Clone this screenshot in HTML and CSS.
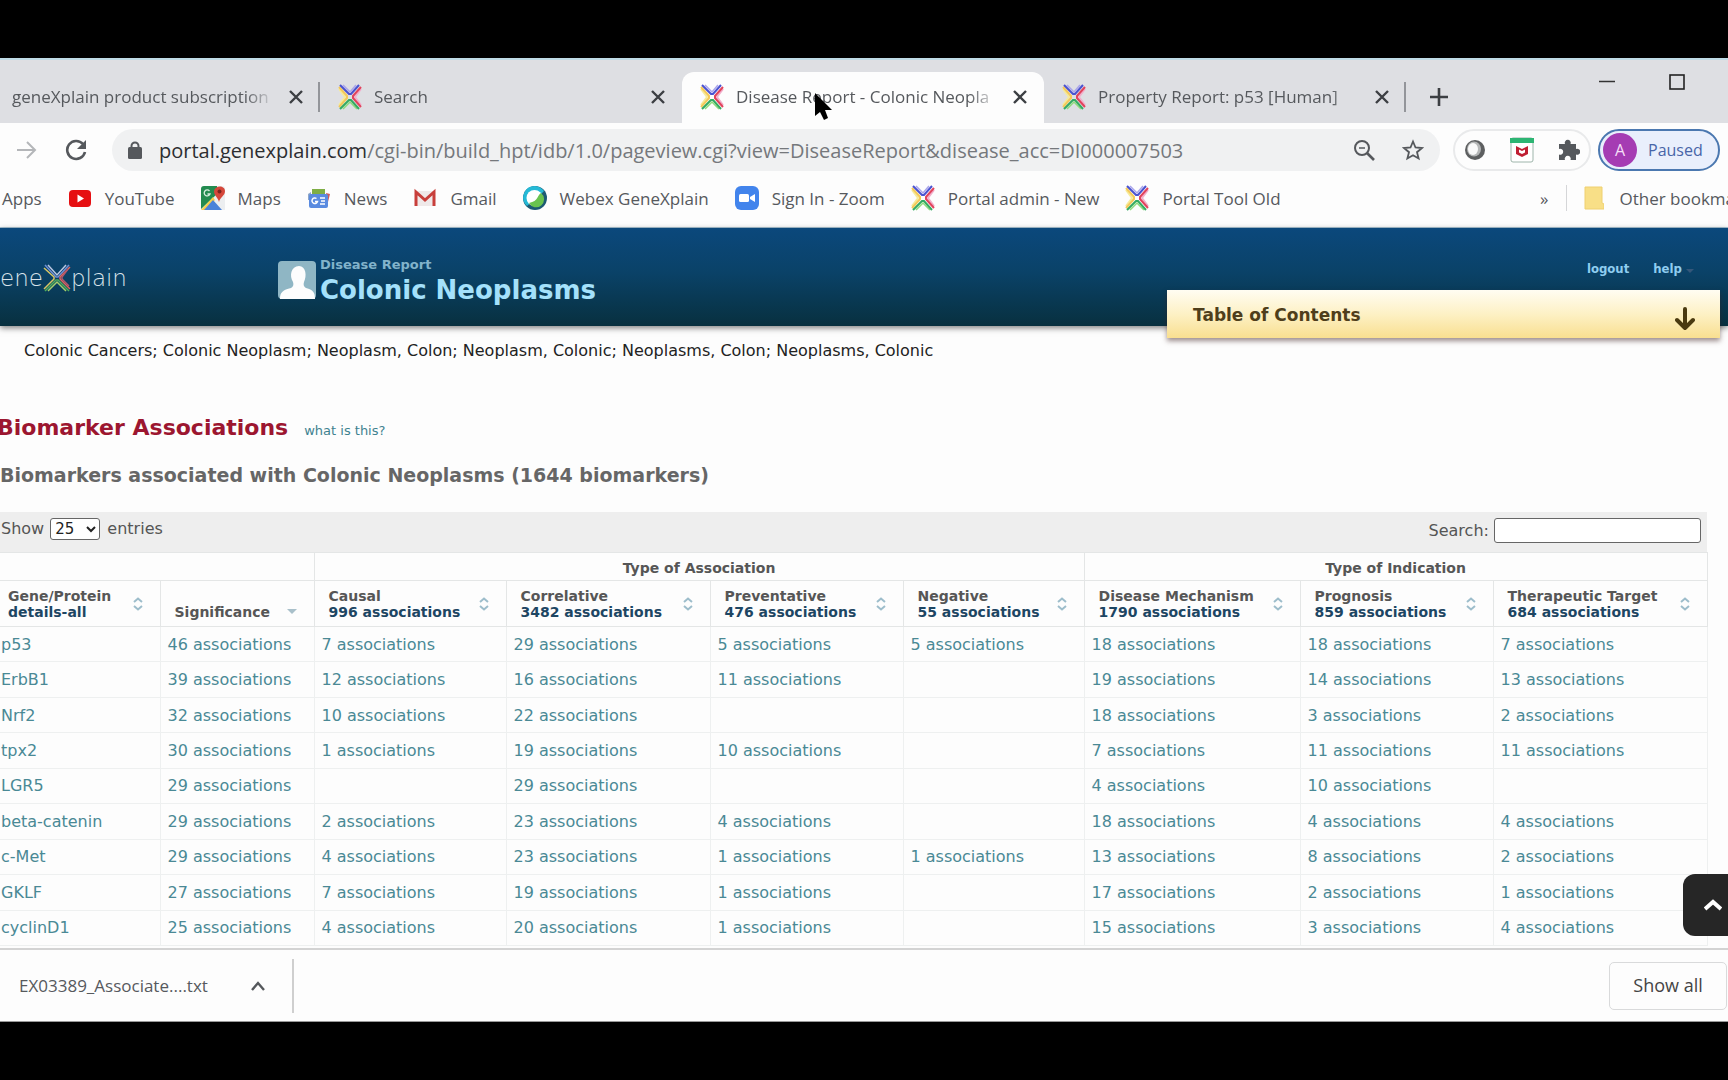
FILE: index.html
```html
<!DOCTYPE html>
<html lang="en">
<head>
    <meta charset="UTF-8">
    <meta name="viewport" content="width=device-width, initial-scale=1.0">
    <title>Disease Report - Colonic Neoplasms</title>
    <link rel="stylesheet" href="styles.css">
</head>
<body>
    <!-- shared icons -->
    <svg class="defs" aria-hidden="true">
        <symbol id="x-logo" viewBox="0 0 24 26">
            <g fill="none" stroke-width="2">
                <path d="M5 1 L12 8 L18 1" stroke="#a9a4ec" stroke-width="1.500"/>
                <path d="M23 5 L17 13 L23 21" stroke="#f2b0cc"/>
                <path d="M1 5 L7 13 L1 21" stroke="#f6eb9a"/>
                <path d="M5 25 L12 18 L19 25" stroke="#8fdc7c" stroke-width="1.500"/>
                <path d="M1 3 L9 12 V14 L1 23" stroke="#f5c95a"/>
                <path d="M23 3 L15 12 V14 L23 23" stroke="#e2435c"/>
                <path d="M2 1 L11 10 H13 L21 1" stroke="#4a52d0"/>
                <path d="M2 25 L11 16 H13 L21 25" stroke="#35ab63"/>
            </g>
        </symbol>
        <symbol id="close" viewBox="0 0 14 14">
            <path d="M1 1 L13 13 M13 1 L1 13" stroke="#3c3f43" stroke-width="2.4"/>
        </symbol>
        <symbol id="sort" viewBox="0 0 10 14">
            <path d="M1 5 L5 1.500 L9 5 M1 9 L5 12.500 L9 9" fill="none" stroke="#9dbdcb" stroke-width="2"/>
        </symbol>
    </svg>

    <div class="window">
        <div class="tabs">
            <div class="tab first">
                <span class="label">geneXplain product subscription</span>
                <button aria-label="Close tab"><svg><use href="#close"/></svg></button>
            </div>
            <div class="tab">
                <svg class="favicon"><use href="#x-logo"/></svg>
                <span class="label">Search</span>
                <button aria-label="Close tab"><svg><use href="#close"/></svg></button>
            </div>
            <div class="tab active">
                <svg class="favicon"><use href="#x-logo"/></svg>
                <span class="label">Disease Report - Colonic Neopla</span>
                <button aria-label="Close tab"><svg><use href="#close"/></svg></button>
            </div>
            <div class="tab last">
                <svg class="favicon"><use href="#x-logo"/></svg>
                <span class="label">Property Report: p53 [Human]</span>
                <button aria-label="Close tab"><svg><use href="#close"/></svg></button>
            </div>
            <button class="new-tab" aria-label="New tab">
                <svg viewBox="0 0 18 18"><path d="M9 0 V18 M0 9 H18" stroke="#3c3f43" stroke-width="2.6"/></svg>
            </button>
            <div class="window-buttons">
                <button aria-label="Minimize"><svg viewBox="0 0 16 16"><path d="M0 7.500 H16" stroke="#333" stroke-width="1.500"/></svg></button>
                <button aria-label="Maximize"><svg viewBox="0 0 16 16"><rect x="1" y="1" width="14" height="14" fill="none" stroke="#222" stroke-width="1.600"/></svg></button>
            </div>
            <svg class="cursor" viewBox="0 0 20 28"><path d="M1 0 V23 L6 19 L10 27 L14 25 L11 17 H18 Z"/></svg>
        </div>

        <div class="toolbar">
            <button class="forward" aria-label="Forward">
                <svg viewBox="0 0 20 20"><path d="M0 10 H18 M10 2 L18 10 L10 18" fill="none" stroke="#b4b6b9" stroke-width="2"/></svg>
            </button>
            <button class="reload" aria-label="Reload">
                <svg viewBox="0 0 22 22"><path d="M18 5 A9 9 0 1 0 20 13" fill="none" stroke="#55585c" stroke-width="2.600"/><path d="M21 1 V10 H12 Z" fill="#55585c"/></svg>
            </button>
            <div class="address">
                <svg class="lock" viewBox="0 0 14 18"><path d="M3.500 8 V5 A3.500 3.500 0 0 1 10.500 5 V8" fill="none" stroke="#55585c" stroke-width="2"/><rect y="6" width="14" height="12" rx="1.500" fill="#55585c"/></svg>
                <span class="url"><b>portal.genexplain.com</b>/cgi-bin/build_hpt/idb/1.0/pageview.cgi?view=DiseaseReport&amp;disease_acc=DI000007503</span>
                <button aria-label="Zoom"><svg viewBox="0 0 22 22"><g fill="none" stroke="#55585c" stroke-width="2"><circle cx="9" cy="9" r="7"/><path d="M14 14 L21 21" stroke-width="2.600"/><path d="M6 9 H12" stroke-width="1.500"/></g></svg></button>
                <button aria-label="Bookmark this tab"><svg viewBox="0 0 22 22"><path d="M11 2.500 L13.500 8.500 L20 9 L15 13.200 L16.600 19.500 L11 16.200 L5.400 19.500 L7 13.200 L2 9 L8.500 8.500 Z" fill="none" stroke="#55585c" stroke-width="1.800"/></svg></button>
            </div>
            <div class="extensions">
                <button aria-label="Extension"><svg viewBox="0 0 22 22"><circle cx="11" cy="11" r="10" fill="#5d5f60"/><ellipse cx="10" cy="10" rx="7" ry="7.500" fill="#b5b7b7"/><ellipse cx="9" cy="10" rx="5" ry="6" fill="#fafafa"/></svg></button>
                <button aria-label="McAfee"><svg class="mcafee" viewBox="0 0 24 26"><rect x="1" y="1" width="22" height="24" rx="2" fill="#fff" stroke="#9eb5ab"/><path d="M0 1 H24 V6 H0 Z" fill="#2db573"/><path d="M6 9 L12 12 L18 9 V17 L12 20 L6 17 Z" fill="#c01f33"/><path d="M9 12.500 L12 14 L15 12.500 V15.500 L12 17 L9 15.500 Z" fill="#fff"/></svg></button>
                <button aria-label="Extensions"><svg viewBox="0 0 22 22"><path d="M1 5 H7 A3 3 0 1 1 12.500 5 H18 V10 A3 3 0 1 1 18 15.500 V21 H12.500 A3 3 0 1 0 7 21 H1 V15.500 A3 3 0 1 0 1 10 Z" fill="#55585c"/></svg></button>
            </div>
            <button class="profile"><span class="avatar">A</span>Paused</button>
        </div>

        <div class="bookmarks">
            <a href="#">Apps</a>
            <a href="#"><svg viewBox="0 0 24 24"><rect x="1" y="4" width="22" height="17" rx="4" fill="#e60f12"/><path d="M9.500 8.500 L16 12.500 L9.500 16.500 Z" fill="#fff"/></svg>YouTube</a>
            <a href="#"><svg viewBox="0 0 24 24"><path d="M3 0 H21 A3 3 0 0 1 24 3 V24 H0 V3 A3 3 0 0 1 3 0 Z" fill="#eceef0"/><path d="M3 0 H16 V8 L0 23 V3 A3 3 0 0 1 3 0 Z" fill="#238b50"/><path d="M0 24 L12 11 L14 14 L4 24 Z" fill="#f6cf4a"/><path d="M3 24 L12 14 L21 24 Z" fill="#4b82d9"/><path d="M18 16 C17 11 13 10 13 5 C14 -1 24 -1 24 5 C24 10 19 11 18 16 Z" fill="#d5473a"/><circle cx="18.500" cy="5.500" r="2" fill="#7d231d"/><path d="M8.500 5 A3 3 0 1 0 9 8 H6.500" fill="none" stroke="#d8eedf" stroke-width="1.300"/></svg>Maps</a>
            <a href="#"><svg viewBox="0 0 24 24"><rect x="5" y="3" width="13" height="8" fill="#7fae45"/><path d="M19 7 L23 8 L21 16 Z" fill="#cf5a5a"/><path d="M1 8 L4 6 V14 H1 Z" fill="#8fa7c8"/><rect x="2" y="8" width="19" height="14" rx="2" fill="#5a8be0"/><g fill="none" stroke="#fff" stroke-width="1.500"><path d="M9.500 12.500 A2.800 2.800 0 1 0 10.500 15.500 H8"/><path d="M13 12 H18 M14 15 H18 M13 18 H18"/></g></svg>News</a>
            <a href="#"><svg viewBox="0 0 24 24"><path d="M2 5 H22 V20 H2 Z" fill="#efe9e9"/><path d="M3 20 V6 L12 14 L21 6 V20" fill="none" stroke="#c83f3b" stroke-width="3"/></svg>Gmail</a>
            <a href="#"><svg viewBox="0 0 24 24"><circle cx="12" cy="12" r="12" fill="#1c5a73"/><path d="M4 20 A11.500 11.500 0 0 1 12 0 A12 12 0 0 1 21 5 L18 8 Z" fill="#25b9d6"/><circle cx="11.500" cy="12" r="8" fill="#fff"/><path d="M18 7 C14 9 16 15 6 17 A8 8 0 1 0 18 7 Z" fill="#69c34e"/></svg>Webex GeneXplain</a>
            <a href="#"><svg viewBox="0 0 24 24"><rect width="24" height="24" rx="6" fill="#4284ec"/><rect x="4" y="8" width="10" height="8" rx="1.500" fill="#fff"/><path d="M15 11 L20 8 V16 L15 13 Z" fill="#fff"/></svg>Sign In - Zoom</a>
            <a href="#"><svg><use href="#x-logo"/></svg>Portal admin - New</a>
            <a href="#"><svg><use href="#x-logo"/></svg>Portal Tool Old</a>
            <div class="other">
                <button class="more" aria-label="More bookmarks">»</button>
                <a href="#"><svg class="folder" viewBox="0 0 20 24"><path d="M1 1 H18 V17 L20 18 V23 H1 Z" fill="#f8df87" stroke="#efd070"/></svg>Other bookmarks</a>
            </div>
        </div>

        <header>
            <a class="brand" href="#">ene<svg viewBox="0 0 28 28"><g fill="none" stroke-width="1.500"><path d="M2 1 L13 13 H15 L26 1" stroke="#6f8fd6"/><path d="M5 1 L14 11 L23 1" stroke="#b9c6e2"/><path d="M1 4 L11 13 V15 L1 25" stroke="#d9c763"/><path d="M27 3 L17 13 V15 L27 25" stroke="#e0655c"/><path d="M25 5 L19 13 V15 L26 22" stroke="#b0576c"/><path d="M2 27 L13 16 H15 L26 27" stroke="#4fae5c"/><path d="M5 27 L14 18 L23 27" stroke="#a5cf6c"/></g></svg>plain</a>
            <div class="report-title">
                <svg viewBox="0 0 38 38"><rect width="38" height="38" rx="4" fill="#8fb6c4"/><path d="M2 38 C2 31 5 29 13 27 C15 26 16 24 15 21 C11 15 13 5 21 5 C28 5 29 15 26 21 C25 24 26 26 28 27 C35 29 37 31 37 38 Z" fill="#fdfdfd"/></svg>
                <div>
                    <p>Disease Report</p>
                    <h1>Colonic Neoplasms</h1>
                </div>
            </div>
            <nav>
                <a href="#">logout</a>
                <a href="#">help <span class="caret"></span></a>
            </nav>
            <button class="contents">Table of Contents
                <svg viewBox="0 0 20 24"><path d="M10 2 V21 M2 13 L10 21 L18 13" fill="none" stroke="#4a3a10" stroke-width="4" stroke-linecap="round" stroke-linejoin="round"/></svg>
            </button>
        </header>

        <main>
            <p class="synonyms">Colonic Cancers; Colonic Neoplasm; Neoplasm, Colon; Neoplasm, Colonic; Neoplasms, Colon; Neoplasms, Colonic</p>
            <div class="section-title">
                <h2>Biomarker Associations</h2>
                <a href="#">what is this?</a>
            </div>
            <h3>Biomarkers associated with Colonic Neoplasms (1644 biomarkers)</h3>

            <div class="table-tools">
                <label>Show <select><option>25</option><option>50</option><option>100</option></select> entries</label>
                <label class="search">Search: <input type="text"></label>
            </div>
            <table>
                <colgroup>
                    <col class="gene"><col class="significance"><col class="causal"><col class="correlative"><col class="preventative"><col class="negative"><col class="mechanism"><col class="prognosis"><col class="target">
                </colgroup>
                <thead>
                    <tr class="groups">
                        <th colspan="2"></th>
                        <th colspan="4">Type of Association</th>
                        <th colspan="3">Type of Indication</th>
                    </tr>
                    <tr class="columns" id="columns"></tr>
                </thead>
                <tbody id="rows"></tbody>
            </table>
            <button class="to-top" aria-label="Back to top">
                <svg viewBox="0 0 18 12"><path d="M1 10 L9 3 L17 10" fill="none" stroke="#fff" stroke-width="4"/></svg>
            </button>
        </main>

        <div class="downloads">
            <button class="file">EX03389_Associate....txt
                <svg viewBox="0 0 14 10"><path d="M1 9 L7 2 L13 9" fill="none" stroke="#55585c" stroke-width="2.400"/></svg>
            </button>
            <button class="show-all">Show all</button>
        </div>
    </div>

    <script>
        const columns = [
            ["Gene/Protein", "details-all"],
            ["Significance"],
            ["Causal", "996 associations"],
            ["Correlative", "3482 associations"],
            ["Preventative", "476 associations"],
            ["Negative", "55 associations"],
            ["Disease Mechanism", "1790 associations"],
            ["Prognosis", "859 associations"],
            ["Therapeutic Target", "684 associations"]
        ];

        // gene, then the number of associations per column (0 = empty cell)
        const genes = [
            ["p53", 46, 7, 29, 5, 5, 18, 18, 7],
            ["ErbB1", 39, 12, 16, 11, 0, 19, 14, 13],
            ["Nrf2", 32, 10, 22, 0, 0, 18, 3, 2],
            ["tpx2", 30, 1, 19, 10, 0, 7, 11, 11],
            ["LGR5", 29, 0, 29, 0, 0, 4, 10, 0],
            ["beta-catenin", 29, 2, 23, 4, 0, 18, 4, 4],
            ["c-Met", 29, 4, 23, 1, 1, 13, 8, 2],
            ["GKLF", 27, 7, 19, 1, 0, 17, 2, 1],
            ["cyclinD1", 25, 4, 20, 1, 0, 15, 3, 4]
        ];

        document.getElementById("columns").innerHTML = columns.map(([title, total]) => {
            const link = total ? `<a href="#">${total}</a>` : "";
            const icon = total ? '<svg class="sort"><use href="#sort"/></svg>' : '<span class="sorted"></span>';
            return `<th><div><span>${title}${link}</span>${icon}</div></th>`;
        }).join("");

        document.getElementById("rows").innerHTML = genes.map(([name, ...counts]) => {
            const cells = counts.map(n => n ? `<td><a href="#">${n} associations</a></td>` : "<td></td>");
            return `<tr><td><a href="#">${name}</a></td>${cells.join("")}</tr>`;
        }).join("");
    </script>
</body>
</html>
```
FILE: styles.css
```css
* {
    box-sizing: border-box;
}

body {
    margin: 0;
    padding: 58px 0;
    height: 100vh;
    background: #000;
    font-family: "DejaVu Sans", Verdana, sans-serif;
    font-size: 14px;
    overflow: hidden;
}

h1, h2, h3, p {
    margin: 0;
}

a {
    text-decoration: none;
}

button {
    border: none;
    background: none;
    padding: 0;
    font: inherit;
    color: inherit;
    cursor: pointer;
}

svg {
    display: block;
    flex: none;
}

.defs {
    position: absolute;
    width: 0;
    height: 0;
}

.window {
    display: flex;
    flex-direction: column;
    height: 100%;
    background: #fdfdfd;
    overflow: hidden;
}

/* browser tabs */
.tabs,
.toolbar,
.bookmarks,
.downloads {
    flex: none;
    font-family: "Open Sans", "Segoe UI", sans-serif;
    font-size: 17px;
    color: #56595d;
    white-space: nowrap;
}

.tabs {
    position: relative;
    display: flex;
    height: 65px;
    padding-top: 12px;
    background: #dedfe3;
    border-top: 2px solid #bfdbe6;
}

.tab {
    display: flex;
    align-items: center;
    width: 362px;
    padding: 0 17px 2px 18px;
    position: relative;
}

.tab.first {
    width: 320px;
    padding-left: 12px;
}

.tab.first::after,
.tab.last::after {
    content: "";
    position: absolute;
    right: 0;
    top: 10px;
    width: 2px;
    height: 30px;
    background: #93959a;
}

.tab.active {
    background: #fdfdfd;
    border-radius: 12px 12px 0 0;
}

.favicon {
    width: 24px;
    height: 26px;
    margin-right: 12px;
}

.tab .label {
    flex: 1;
    min-width: 0;
    margin-right: 14px;
    overflow: hidden;
    mask-image: linear-gradient(to right, #000 calc(100% - 30px), transparent);
}

.tab button svg {
    width: 14px;
    height: 14px;
}

.new-tab {
    margin-left: 24px;
    padding-bottom: 2px;
}

.new-tab svg {
    width: 18px;
    height: 18px;
}

.window-buttons {
    display: flex;
    gap: 54px;
    height: 16px;
    margin: 2px 43px 0 auto;
}

.window-buttons svg {
    width: 16px;
    height: 16px;
}

.cursor {
    position: absolute;
    left: 814px;
    top: 33px;
    width: 20px;
    height: 28px;
}

/* address bar */
.toolbar {
    display: flex;
    align-items: center;
    height: 54px;
    padding: 0 8px 0 17px;
}

.forward svg {
    width: 20px;
    height: 20px;
}

.reload {
    margin: 0 25px 0 28px;
}

.reload svg {
    width: 22px;
    height: 22px;
}

.address {
    display: flex;
    flex: 1;
    align-items: center;
    gap: 27px;
    height: 42px;
    margin-right: 13px;
    padding: 0 16px;
    border-radius: 21px;
    background: #f0f1f2;
    font-size: 20px;
    color: #75787c;
}

.lock {
    width: 14px;
    height: 18px;
    margin-right: -10px;
}

.url {
    flex: 1;
}

.url b {
    font-weight: normal;
    color: #2c2e31;
}

.address button svg,
.extensions svg {
    width: 22px;
    height: 22px;
}

.extensions {
    display: flex;
    align-items: center;
    justify-content: space-between;
    width: 138px;
    height: 42px;
    margin-right: 7px;
    padding: 0 9px;
    border: 2px solid #e9eaeb;
    border-radius: 21px;
}

.extensions .mcafee {
    width: 24px;
    height: 26px;
}

.profile {
    display: flex;
    align-items: center;
    gap: 11px;
    width: 122px;
    height: 42px;
    padding-left: 3px;
    border: 2px solid #4b78b0;
    border-radius: 21px;
    background: #e9effc;
    color: #4865a8;
    font-size: 16px;
}

.avatar {
    width: 34px;
    height: 34px;
    border-radius: 50%;
    background: #a53cb3;
    color: #f5dff7;
    line-height: 34px;
}

/* bookmarks */
.bookmarks {
    display: flex;
    align-items: center;
    gap: 26px;
    height: 51px;
    padding-left: 2px;
    padding-bottom: 8px;
    border-bottom: 1px solid #a9c4d4;
}

.bookmarks a {
    display: flex;
    align-items: center;
    gap: 13px;
    color: #56595d;
}

.bookmarks svg {
    width: 24px;
    height: 26px;
}

.other {
    display: flex;
    align-items: center;
    width: 188px;
    margin-left: auto;
}

.bookmarks .other a {
    margin-left: 18px;
    padding-left: 17px;
    border-left: 1px solid #d5d6d8;
    gap: 15px;
}

.bookmarks .folder {
    width: 20px;
}

/* page header */
header {
    position: relative;
    z-index: 1;
    display: flex;
    flex: none;
    height: 98px;
    background: linear-gradient(#0b487c, #0a4268 45%, #08303f);
    box-shadow: 0 2px 6px rgba(0, 0, 0, 0.5);
}

.brand {
    display: flex;
    align-items: center;
    width: 278px;
    height: 98px;
    padding-top: 2px;
    font-size: 23px;
    font-weight: 200;
    color: #d8e3ea;
}

.brand svg {
    width: 28px;
    height: 28px;
}

.report-title {
    display: flex;
    gap: 4px;
    padding-top: 29px;
}

.report-title svg {
    width: 38px;
    height: 38px;
    margin-top: 4px;
}

.report-title p {
    font-size: 13px;
    line-height: 16px;
    font-weight: bold;
    color: #82b3cb;
}

.report-title h1 {
    font-size: 26px;
    line-height: 34px;
    color: #a4e1fb;
}

nav {
    display: flex;
    gap: 24px;
    margin-left: auto;
    padding: 32px 34px 0 0;
}

nav a {
    font-family: "DejaVu Sans Condensed", "DejaVu Sans", sans-serif;
    font-size: 13px;
    line-height: 18px;
    font-weight: bold;
    color: #8fcdf0;
}

.caret {
    display: inline-block;
    border: 4px solid transparent;
    border-top-color: #35577a;
    border-bottom: none;
}

.contents {
    position: absolute;
    right: 8px;
    top: 62px;
    width: 553px;
    height: 48px;
    display: flex;
    align-items: center;
    justify-content: space-between;
    padding: 2px 25px 0 26px;
    background: linear-gradient(#fffdf2, #fdf1c5 50%, #f9df90);
    box-shadow: 0 3px 5px rgba(60, 30, 30, 0.5);
    font-size: 17px;
    font-weight: bold;
    color: #4f3e1b;
}

.contents svg {
    width: 20px;
    height: 24px;
    margin-top: 8px;
}

/* report */
main {
    position: relative;
    flex: 1;
    min-height: 0;
    overflow: hidden;
    padding-right: 21px;
}

.synonyms {
    padding: 15px 0 0 24px;
    font-size: 16px;
    line-height: 20px;
    color: #222;
}

.section-title {
    display: flex;
    align-items: baseline;
    gap: 16px;
    margin: 53px 0 0 -3px;
    line-height: 28px;
}

h2 {
    font-size: 22px;
    color: #9c1630;
}

.section-title a {
    font-size: 13px;
    color: #3f8290;
}

h3 {
    margin-top: 17px;
    font-size: 19px;
    line-height: 26px;
    color: #666;
}

.table-tools {
    display: flex;
    justify-content: space-between;
    height: 40px;
    margin-top: 24px;
    padding: 6px 6px 0 1px;
    background: #eee;
    font-size: 16px;
    line-height: 22px;
    color: #555;
}

.table-tools select {
    width: 50px;
    height: 22px;
    margin: 0 2px 0 1px;
    padding: 0;
    border: 1px solid #666;
    border-radius: 3px;
    background: #fff;
    font: inherit;
    font-size: 15px;
    line-height: 20px;
    vertical-align: top;
    color: #222;
}

.search {
    line-height: 26px;
}

.table-tools input {
    width: 207px;
    height: 25px;
    border: 1px solid #666;
    border-radius: 3px;
    background: #fff;
    vertical-align: top;
}

table {
    width: 100%;
    height: 394px;
    table-layout: fixed;
    border-collapse: collapse;
}

.gene { width: 160px; }
.significance { width: 154px; }
.causal { width: 192px; }
.correlative { width: 204px; }
.preventative { width: 193px; }
.negative { width: 181px; }
.mechanism { width: 216px; }
.prognosis { width: 193px; }
.target { width: 214px; }

th,
td {
    padding: 0 0 0 7px;
    border: 1px solid #eef0f0;
    border-left: none;
    text-align: left;
}

td:first-child {
    padding-left: 1px;
}

td {
    font-size: 16px;
}

td a {
    color: #4a8995;
}

th {
    font-size: 14px;
    line-height: 16px;
    color: #565656;
    border-color: #e4e6e6;
}

.groups th {
    height: 28px;
    padding: 2px 0 0;
    text-align: center;
}

.columns th {
    height: 46px;
    padding: 0 17px 0 14px;
}

.columns th:first-child {
    padding-left: 8px;
}

.columns div {
    display: flex;
    align-items: center;
    justify-content: space-between;
    white-space: nowrap;
}

.columns th:nth-child(2) div {
    padding-top: 16px;
}

.columns a {
    display: block;
    color: #1d4663;
}

.sort {
    width: 10px;
    height: 14px;
}

.sorted {
    border: 5px solid transparent;
    border-top-color: #a9c0ca;
    border-bottom: none;
}

.to-top {
    position: absolute;
    right: 0;
    bottom: 12px;
    width: 45px;
    height: 62px;
    padding-left: 21px;
    border-radius: 12px 0 0 12px;
    background: #262626;
}

.to-top svg {
    width: 18px;
    height: 12px;
}

/* download bar */
.downloads {
    display: flex;
    align-items: center;
    justify-content: space-between;
    height: 74px;
    border-top: 2px solid #d3d3d3;
    border-bottom: 1px solid #999;
}

.file {
    display: flex;
    align-items: center;
    gap: 43px;
    height: 54px;
    padding: 0 27px 0 19px;
    border-right: 2px solid #cfcfcf;
}

.file svg {
    width: 14px;
    height: 10px;
}

.show-all {
    width: 118px;
    height: 48px;
    margin-right: 1px;
    padding-bottom: 2px;
    border: 1px solid #d9dadb;
    border-radius: 5px;
    font-size: 18px;
    color: #444;
}
```
